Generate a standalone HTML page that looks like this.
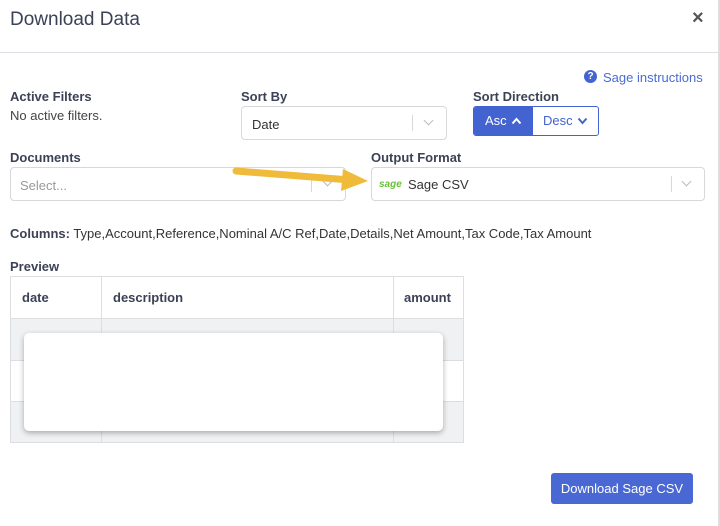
<!DOCTYPE html>
<html><head><style>
*{box-sizing:border-box;margin:0;padding:0}
body{width:720px;height:526px;background:#fff;font-family:"Liberation Sans",sans-serif;color:#333;position:relative;overflow:hidden;font-size:13px}
.a{position:absolute}
.lbl{font-weight:bold;color:#3b4256;font-size:13px}
.sel{position:absolute;border:1px solid #d6d8dc;border-radius:4px;background:#fff}
.sep{position:absolute;top:8px;bottom:8px;width:1px;background:#d6d8dc}
.chev{position:absolute;width:7px;height:7px;border-right:1.3px solid #bbb;border-bottom:1.3px solid #bbb;transform:rotate(45deg)}
td{border:1px solid #dcdee2}
</style></head><body>
<div class="a" style="left:10px;top:9px;font-size:19px;color:#3b4256">Download Data</div>
<div class="a" style="left:692px;top:7px;font-size:20px;color:#555;font-weight:bold">×</div>
<div class="a" style="left:0;top:52px;width:720px;height:1px;background:#dde0e4"></div>
<div class="a" style="left:718px;top:0;width:2px;height:526px;background:#ddd"></div>

<div class="a" style="left:584px;top:70px;width:13px;height:13px;border-radius:50%;background:#4363d0;color:#fff;font-size:10px;font-weight:bold;text-align:center;line-height:13px">?</div>
<div class="a" style="left:603px;top:70px;color:#4a6bd6;font-size:13px">Sage instructions</div>

<div class="a lbl" style="left:10px;top:89px">Active Filters</div>
<div class="a" style="left:10px;top:108px;color:#444">No active filters.</div>

<div class="a lbl" style="left:241px;top:89px">Sort By</div>
<div class="sel" style="left:241px;top:106px;width:206px;height:34px"><span class="a" style="left:10px;top:10px">Date</span><div class="sep" style="left:170px"></div><div class="chev" style="left:183px;top:10px"></div></div>

<div class="a lbl" style="left:473px;top:89px">Sort Direction</div>
<div class="a" style="left:473px;top:106px;width:126px;height:30px;border:1px solid #4363d0;border-radius:3px;overflow:hidden">
<div class="a" style="left:0;top:0;width:59px;height:30px;background:#4363d0;color:#fff;line-height:28px;padding-left:11px">Asc <svg width="11" height="8" style="margin-left:1px"><polyline points="1.5,6.5 5.5,2 9.5,6.5" fill="none" stroke="#fff" stroke-width="2"/></svg></div>
<div class="a" style="left:59px;top:0;width:66px;height:30px;color:#4363d0;line-height:28px;padding-left:10px">Desc <svg width="11" height="8" style="margin-left:1px"><polyline points="1.5,1.5 5.5,6 9.5,1.5" fill="none" stroke="#4363d0" stroke-width="2"/></svg></div>
</div>

<div class="a lbl" style="left:10px;top:150px">Documents</div>
<div class="sel" style="left:10px;top:167px;width:336px;height:34px"><span class="a" style="left:9px;top:10px;color:#999">Select...</span><div class="sep" style="left:300px"></div><div class="chev" style="left:313px;top:10px"></div></div>

<div class="a lbl" style="left:371px;top:150px">Output Format</div>
<div class="sel" style="left:371px;top:167px;width:334px;height:34px"><span class="a" style="left:7px;top:11px;color:#6cbf3a;font-size:10px;font-weight:bold;font-style:italic">sage</span><span class="a" style="left:36px;top:9px">Sage CSV</span><div class="sep" style="left:299px"></div><div class="chev" style="left:311px;top:10px"></div></div>

<svg class="a" style="left:230px;top:160px" width="145" height="35"><line x1="6" y1="11" x2="120" y2="20" stroke="#f0bb3a" stroke-width="7" stroke-linecap="round"/><polygon points="113,9 138,21 111,31" fill="#f0bb3a"/></svg>

<div class="a" style="left:10px;top:226px;color:#333"><b style="color:#3b4256">Columns:</b> Type,Account,Reference,Nominal A/C Ref,Date,Details,Net Amount,Tax Code,Tax Amount</div>

<div class="a lbl" style="left:10px;top:259px">Preview</div>
<table class="a" style="left:10px;top:276px;width:454px;border-collapse:collapse">
<tr style="height:42px"><td style="width:91px;padding-left:11px" class="lbl">date</td><td style="width:292px;padding-left:11px" class="lbl">description</td><td class="lbl" style="padding-left:10px">amount</td></tr>
<tr style="height:42px;background:#f0f1f3"><td></td><td></td><td></td></tr>
<tr style="height:41px"><td></td><td></td><td></td></tr>
<tr style="height:41px;background:#f0f1f3"><td></td><td></td><td></td></tr>
</table>
<div class="a" style="left:24px;top:333px;width:419px;height:98px;background:#fff;border-radius:5px;box-shadow:0 2px 6px rgba(0,0,0,.3)"></div>

<div class="a" style="left:551px;top:473px;width:142px;height:31px;background:#4a68d4;border-radius:3px;color:#fff;text-align:center;line-height:31px">Download Sage CSV</div>
</body></html>
